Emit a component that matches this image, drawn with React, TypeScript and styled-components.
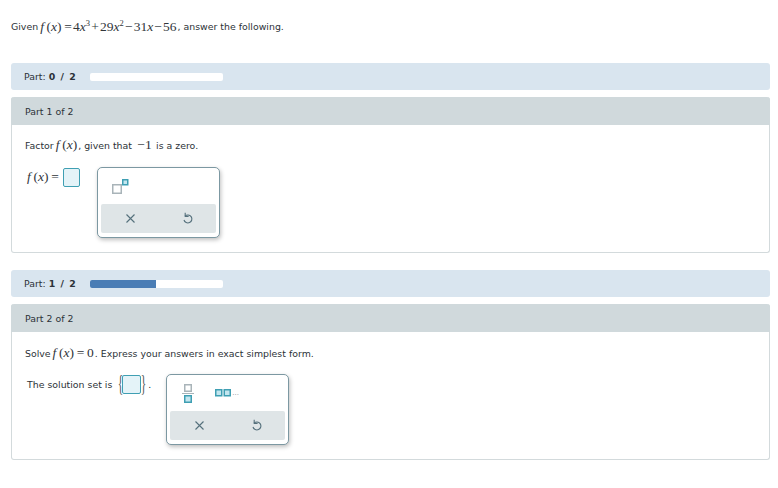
import React from "react";
import styled, { createGlobalStyle } from "styled-components";

const GlobalStyle = createGlobalStyle`
  html, body {
    margin: 0;
    padding: 0;
    background: #fff;
  }
  body {
    font-family: "DejaVu Sans", Verdana, sans-serif;
    font-size: 9.4px;
    color: #2c3238;
  }
`;

const Page = styled.div`
  width: 778px;
  height: 488px;
  padding: 19px 8px 0 11px;
  box-sizing: border-box;
  overflow: hidden;
`;

const Intro = styled.div`
  height: 15px;
  display: flex;
  align-items: center;
  margin-bottom: 29px;
`;

const Line = styled.div`
  display: flex;
  align-items: center;
  height: 14px;
  white-space: pre;
`;

const Math = styled.span`
  font-family: "Liberation Serif", "Times New Roman", serif;
  font-size: 13.5px;
  color: #30353a;
  margin: 0 1px 0 2px;
  white-space: pre;
  i {
    font-style: italic;
  }
  sup {
    font-size: 8.5px;
    line-height: 0;
    vertical-align: 5px;
  }
`;

const ProgressBar = styled.div`
  height: 27px;
  background: #d9e5ef;
  border-radius: 3px;
  display: flex;
  align-items: center;
  padding-left: 13px;
  box-sizing: border-box;
`;

const ProgressLabel = styled.div`
  width: 66px;
  b {
    font-weight: 700;
    word-spacing: 2px;
  }
`;

const Track = styled.div`
  width: 133px;
  height: 8px;
  background: #fff;
  border-radius: 2px;
  overflow: hidden;
`;

const Fill = styled.div<{ $pct: number }>`
  width: ${({ $pct }) => $pct}%;
  height: 100%;
  background: #4a7db5;
`;

const Card = styled.section<{ $bottom: number }>`
  margin-top: 7px;
  margin-bottom: ${({ $bottom }) => $bottom}px;
  height: 156px;
  box-sizing: border-box;
  border: 1px solid #d3dadc;
  border-top: 0;
  border-radius: 3px;
`;

const CardHeader = styled.div`
  height: 28px;
  margin: 0 -1px;
  padding: 1px 0 0 14px;
  box-sizing: border-box;
  background: #d0d9dc;
  border-radius: 3px 3px 0 0;
  display: flex;
  align-items: center;
`;

const CardBody = styled.div<{ $top: number }>`
  padding: ${({ $top }) => $top}px 0 0 13px;
`;

const AnswerRow = styled.div<{ $top: number; $left: number; $gap: number }>`
  display: flex;
  align-items: flex-start;
  margin-top: ${({ $top }) => $top}px;
  margin-left: ${({ $left }) => $left}px;
  gap: ${({ $gap }) => $gap}px;
`;

const AnswerLine = styled.div`
  display: flex;
  align-items: center;
  height: 20px;
  white-space: pre;
`;

const InputBox = styled.span<{ $w: number; $h: number }>`
  display: inline-block;
  width: ${({ $w }) => $w}px;
  height: ${({ $h }) => $h}px;
  box-sizing: border-box;
  background: #e4f3f8;
  border: 1px solid #3f9fb3;
  border-radius: 2px;
`;

const Brace = styled.span`
  font-family: "Liberation Serif", serif;
  font-size: 23px;
  font-weight: 400;
  color: #555;
  line-height: 20px;
  transform: scaleX(0.5);
  width: 5px;
  margin: 0 -0.5px;
  display: flex;
  justify-content: center;
`;

const Period = styled.span`
  margin-left: 3px;
`;

const Palette = styled.div`
  width: 123px;
  height: 71px;
  box-sizing: border-box;
  padding: 3px;
  border: 1px solid #7c98a2;
  border-radius: 5px;
  background: #fff;
  box-shadow: 1px 2px 4px rgba(0, 0, 0, 0.25);
  display: flex;
  flex-direction: column;
`;

const PaletteKeys = styled.div`
  height: 33px;
  display: flex;
  align-items: flex-start;
  flex-shrink: 0;
`;

const PaletteActions = styled.div`
  height: 29px;
  background: #dfe5e7;
  border-radius: 2px;
  display: flex;
  align-items: center;
  justify-content: space-between;
  padding: 0 23px 0 24px;
`;

const KeyIcon = styled.svg<{ $left: number; $top: number }>`
  margin: ${({ $top }) => $top}px 0 0 ${({ $left }) => $left}px;
  flex-shrink: 0;
`;

const Ellipsis = styled.span`
  font-size: 7px;
  color: #8a979c;
  margin-top: 11px;
  line-height: 8px;
`;

const CloseIcon = () => (
  <svg width="11" height="11" viewBox="0 0 11 11">
    <path d="M1.5 1.5l8 8M9.5 1.5l-8 8" stroke="#55707c" strokeWidth="1.1" fill="none" />
  </svg>
);

const UndoIcon = () => (
  <svg width="11" height="13" viewBox="0 0 11 13">
    <path d="M3 4.2A4 4 0 1 1 2 8" stroke="#55707c" strokeWidth="1.1" fill="none" />
    <path d="M3.2 0.8v3.6h3.4" stroke="#55707c" strokeWidth="1.1" fill="none" />
  </svg>
);

const Actions = () => (
  <PaletteActions>
    <CloseIcon />
    <UndoIcon />
  </PaletteActions>
);

const Fx = () => (
  <>
    <i>f</i>
    {"\u2009"}(<i>x</i>)
  </>
);

export default function App() {
  return (
    <Page>
      <GlobalStyle />
      <Intro>
        <Line>
          Given
          <Math>
            <Fx />
            {"\u2009"}={"\u200a"}4<i>x</i>
            <sup>3</sup>
            {"\u200a"}+{"\u200a"}29<i>x</i>
            <sup>2</sup>
            {"\u200a"}−{"\u200a"}31<i>x</i>
            {"\u200a"}−{"\u200a"}56
          </Math>
          , answer the following.
        </Line>
      </Intro>

      <ProgressBar>
        <ProgressLabel>
          Part: <b>0 / 2</b>
        </ProgressLabel>
        <Track>
          <Fill $pct={0} />
        </Track>
      </ProgressBar>

      <Card $bottom={17}>
        <CardHeader>Part 1 of 2</CardHeader>
        <CardBody $top={13}>
          <Line>
            Factor
            <Math>
              <Fx />
            </Math>
            , given that
            <Math> −1 </Math>
            is a zero.
          </Line>
          <AnswerRow $top={15} $left={0} $gap={17}>
            <AnswerLine>
              <Math>
                <Fx />
                {"\u2009"}={"\u2009"}
              </Math>
              <InputBox $w={17} $h={19} />
            </AnswerLine>
            <Palette>
              <PaletteKeys>
                <KeyIcon $left={10} $top={8} width="18" height="15" viewBox="0 0 18 15">
                  <rect x="1.75" y="5.75" width="8.5" height="8.5" fill="#fff" stroke="#a9b4b9" strokeWidth="1.5" />
                  <rect x="11.75" y="0.75" width="5" height="5" fill="#c4e6ef" stroke="#3f9fb3" strokeWidth="1.5" />
                </KeyIcon>
              </PaletteKeys>
              <Actions />
            </Palette>
          </AnswerRow>
        </CardBody>
      </Card>

      <ProgressBar>
        <ProgressLabel>
          Part: <b>1 / 2</b>
        </ProgressLabel>
        <Track>
          <Fill $pct={49.6} />
        </Track>
      </ProgressBar>

      <Card $bottom={0}>
        <CardHeader>Part 2 of 2</CardHeader>
        <CardBody $top={14}>
          <Line>
            Solve
            <Math>
              <Fx />
              {"\u2009"}={"\u2009"}0
            </Math>
            . Express your answers in exact simplest form.
          </Line>
          <AnswerRow $top={14} $left={2} $gap={15}>
            <AnswerLine>
              The solution set is{"  "}
              <Brace>{"{"}</Brace>
              <InputBox $w={19} $h={19} />
              <Brace>{"}"}</Brace>
              <Period>.</Period>
            </AnswerLine>
            <Palette>
              <PaletteKeys>
                <KeyIcon $left={12} $top={6} width="12" height="19" viewBox="0 0 12 19">
                  <rect x="2.75" y="0.75" width="6.5" height="6.5" fill="#fff" stroke="#a9b4b9" strokeWidth="1.5" />
                  <path d="M0 9.5h12" stroke="#a9b4b9" />
                  <rect x="2.75" y="11.75" width="6.5" height="6.5" fill="#c4e6ef" stroke="#3f9fb3" strokeWidth="1.5" />
                </KeyIcon>
                <KeyIcon $left={21} $top={11} width="17" height="8" viewBox="0 0 17 8">
                  <rect x="0.75" y="0.75" width="6" height="6" fill="#c4e6ef" stroke="#3f9fb3" strokeWidth="1.5" />
                  <rect x="9.25" y="0.75" width="6" height="6" fill="#c4e6ef" stroke="#3f9fb3" strokeWidth="1.5" />
                </KeyIcon>
                <Ellipsis>...</Ellipsis>
              </PaletteKeys>
              <Actions />
            </Palette>
          </AnswerRow>
        </CardBody>
      </Card>
    </Page>
  );
}
